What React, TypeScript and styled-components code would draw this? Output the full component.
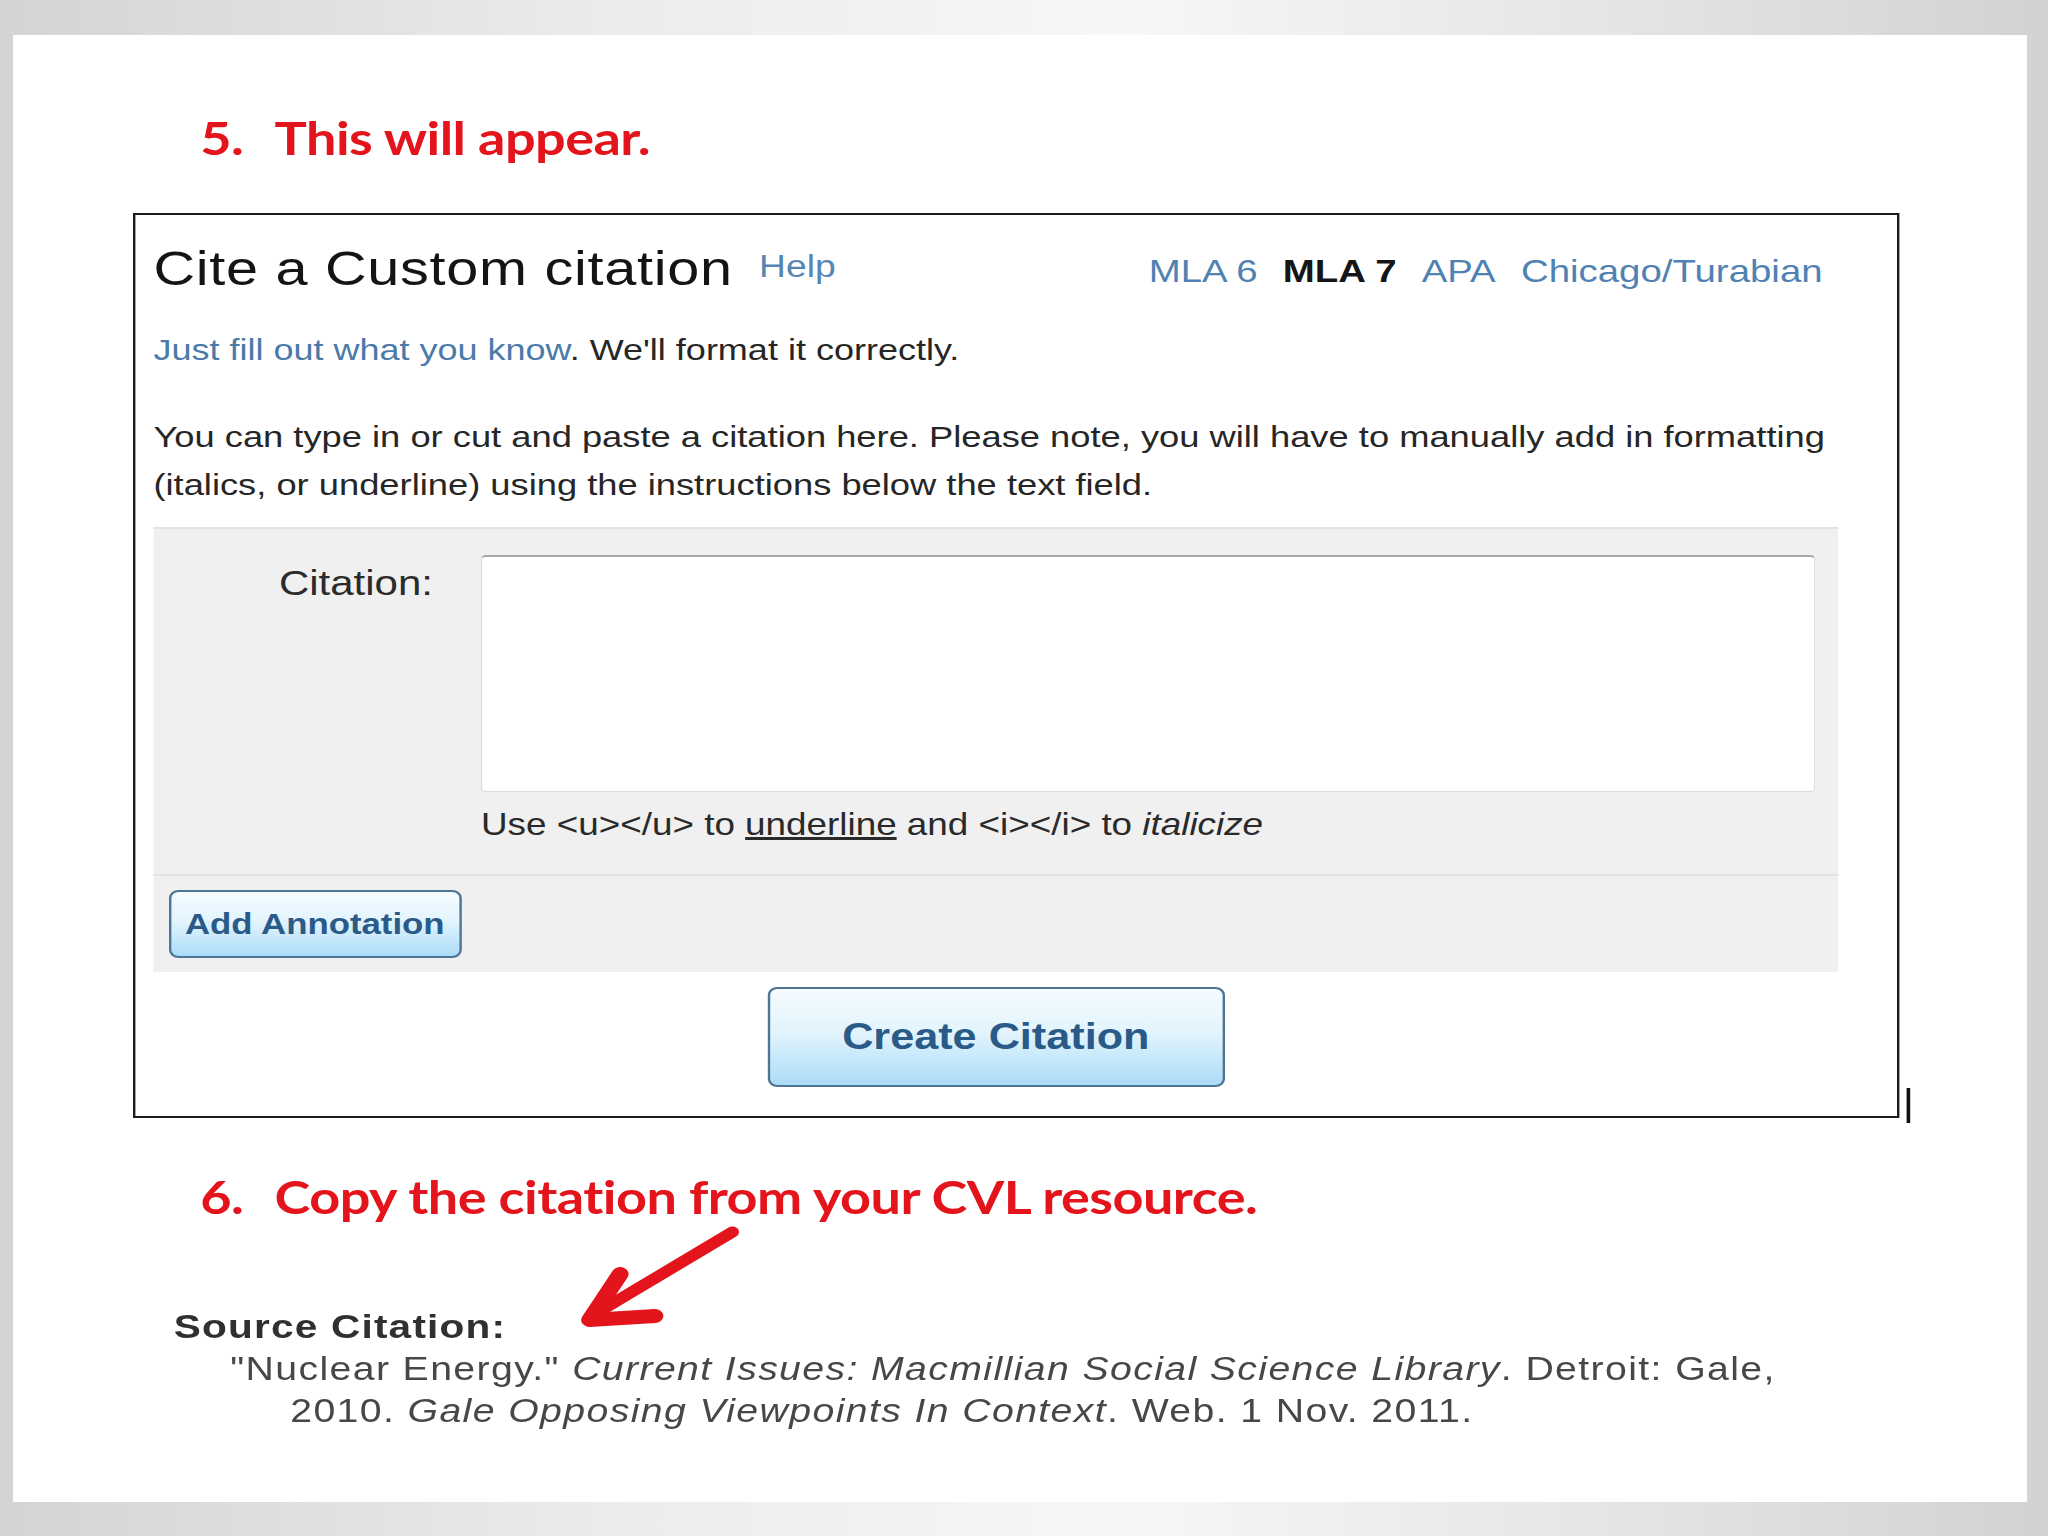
import React from 'react';
import styled, { createGlobalStyle } from 'styled-components';

const GlobalStyle = createGlobalStyle`
  html, body {
    margin: 0;
    padding: 0;
  }
  body {
    width: 2048px;
    height: 1536px;
    overflow: hidden;
    background: linear-gradient(90deg, #d4d4d4 0%, #ececec 30%, #f7f7f7 55%, #e4e4e4 80%, #d2d2d2 100%);
    font-family: "Liberation Sans", Arial, sans-serif;
  }
`;

const Slide = styled.div`
  margin: 35px 0 0 13px;
  width: 2014px;
  height: 1467px;
  background: #fff;
  overflow: hidden;
`;

// the pasted screenshot is stretched sideways, so the content is laid out narrow and widened
const Stretch = styled.div`
  width: 1678px;
  padding-top: 76px;
  transform: scaleX(1.2);
  transform-origin: 0 0;
`;

const StepHeading = styled.h2<{ $top: number }>`
  display: flex;
  margin: ${p => p.$top}px 0 0;
  padding-left: 156px;
  font-family: Lato, "Open Sans", sans-serif;
  font-weight: 700;
  font-size: 45px;
  line-height: 54px;
  letter-spacing: -0.45px;
  color: #e4141c;
`;

const StepNum = styled.span`
  flex-shrink: 0;
  width: 62px;
`;

const CiteBox = styled.section`
  position: relative;
  box-sizing: border-box;
  width: 1472px;
  margin: 48px 0 0 100px;
  padding: 26px 49px 29px 15px;
  border: 2px solid #1b1b1b;
  background: #fff;
`;

const Caret = styled.span`
  position: absolute;
  right: -10.5px;
  bottom: -7px;
  width: 3px;
  height: 35px;
  background: #111;
`;

const HeaderRow = styled.div`
  display: flex;
  align-items: baseline;
  height: 56px;
`;

const Title = styled.h1`
  margin: 0;
  font-weight: 400;
  font-size: 48px;
  line-height: 56px;
  letter-spacing: 0.6px;
  color: #141414;
`;

const HelpLink = styled.a`
  align-self: flex-start;
  margin: 8px 0 0 22px;
  font-size: 31px;
  line-height: 36px;
  color: #5886b4;
  text-decoration: none;
`;

const StyleLinks = styled.nav`
  align-self: flex-start;
  display: flex;
  gap: 21px;
  margin: 12px 0 0 auto;
  padding-right: 13px;
  font-size: 32px;
  line-height: 36px;
`;

const StyleLink = styled.a<{ $active?: boolean }>`
  color: ${p => (p.$active ? '#151515' : '#4f82b3')};
  font-weight: ${p => (p.$active ? 700 : 400)};
  text-decoration: none;
`;

const Intro = styled.p`
  margin: 35px 0 0;
  font-size: 30px;
  line-height: 36px;
  color: #262626;
  white-space: nowrap;
`;

const Accent = styled.span`
  color: #4a7aa8;
`;

const Instructions = styled.p`
  margin: 45px 0 0;
  font-size: 30.25px;
  line-height: 48px;
  color: #262626;
  white-space: nowrap;
`;

const FormPanel = styled.div`
  margin-top: 18px;
  border-top: 2px solid #e2e2e3;
  background: #f0f0f1;
`;

const FieldRow = styled.div`
  display: grid;
  grid-template-columns: 233px 1fr;
  column-gap: 40px;
  padding: 26px 19px 31px 0;
  border-bottom: 2px solid #e3e3e4;
`;

const FieldLabel = styled.label`
  margin-top: 8px;
  font-size: 35px;
  line-height: 40px;
  text-align: right;
  color: #2b2b2b;
`;

const CitationInput = styled.textarea`
  display: block;
  box-sizing: border-box;
  width: 100%;
  height: 237px;
  margin: 0;
  border: 1px solid #dadada;
  border-top: 2px solid #a8a8a8;
  border-radius: 4px;
  background: #fff;
  resize: none;
  outline: none;
`;

const Hint = styled.div`
  grid-column: 2;
  margin-top: 15px;
  font-size: 30.7px;
  line-height: 36px;
  color: #2a2a2a;
  white-space: nowrap;
`;

const ButtonBar = styled.div`
  padding: 14px 0 14px 12.5px;
`;

const BlueButton = styled.button<{ $large?: boolean }>`
  display: block;
  box-sizing: border-box;
  width: ${p => (p.$large ? 381 : 244)}px;
  height: ${p => (p.$large ? 100 : 68)}px;
  padding: 0;
  border: 2px solid #4d7594;
  border-radius: 8px;
  background: linear-gradient(180deg, #f5fcff 0%, #e3f4fd 45%, #abdcf8 100%);
  font-family: "Liberation Sans", Arial, sans-serif;
  font-weight: 700;
  font-size: ${p => (p.$large ? 36 : 29)}px;
  color: #2a5b88;
`;

const CreateRow = styled.div`
  display: flex;
  justify-content: center;
  margin-top: 15px;
`;

const SourceRow = styled.div`
  display: flex;
  align-items: flex-end;
  margin-top: -4px;
  padding-left: 134px;
`;

const SourceLabel = styled.div`
  font-weight: 700;
  font-size: 33.8px;
  line-height: 36px;
  letter-spacing: 1px;
  color: #303030;
`;

const ArrowSvg = styled.svg`
  flex-shrink: 0;
  margin: 0 0 12px 50px;
`;

const SourceText = styled.p`
  margin: 4px 0 0;
  padding-left: 231px;
  text-indent: -50px;
  font-size: 32.7px;
  line-height: 42px;
  letter-spacing: 1.15px;
  color: #474747;
  white-space: nowrap;
`;

const Arrow: React.FC = () => (
  <ArrowSvg width="153" height="112" viewBox="0 0 153 112">
    <line x1="138.5" y1="12" x2="24" y2="94" stroke="#e3141c" strokeWidth="11" strokeLinecap="round" />
    <polyline
      points="45,54 19.5,100 74,96"
      fill="none"
      stroke="#e3141c"
      strokeWidth="14"
      strokeLinejoin="round"
      strokeLinecap="round"
    />
  </ArrowSvg>
);

const citationStyles = [
  { label: 'MLA 6' },
  { label: 'MLA 7', active: true },
  { label: 'APA' },
  { label: 'Chicago/Turabian' },
];

const App: React.FC = () => {
  return (
    <>
      <GlobalStyle />
      <Slide>
        <Stretch>
          <StepHeading $top={0}>
            <StepNum>5.</StepNum>
            This will appear.
          </StepHeading>

          <CiteBox>
            <HeaderRow>
              <Title>Cite a Custom citation</Title>
              <HelpLink>Help</HelpLink>
              <StyleLinks>
                {citationStyles.map(s => (
                  <StyleLink key={s.label} $active={s.active}>
                    {s.label}
                  </StyleLink>
                ))}
              </StyleLinks>
            </HeaderRow>

            <Intro>
              <Accent>Just fill out what you know</Accent>. We'll format it correctly.
            </Intro>

            <Instructions>
              You can type in or cut and paste a citation here. Please note, you will have to manually add in formatting
              <br />
              (italics, or underline) using the instructions below the text field.
            </Instructions>

            <FormPanel>
              <FieldRow>
                <FieldLabel>Citation:</FieldLabel>
                <CitationInput />
                <Hint>
                  Use &lt;u&gt;&lt;/u&gt; to <u>underline</u> and &lt;i&gt;&lt;/i&gt; to <i>italicize</i>
                </Hint>
              </FieldRow>
              <ButtonBar>
                <BlueButton>Add Annotation</BlueButton>
              </ButtonBar>
            </FormPanel>

            <CreateRow>
              <BlueButton $large>Create Citation</BlueButton>
            </CreateRow>
            <Caret />
          </CiteBox>

          <StepHeading $top={52}>
            <StepNum>6.</StepNum>
            Copy the citation from your CVL resource.
          </StepHeading>

          <SourceRow>
            <SourceLabel>Source Citation:</SourceLabel>
            <Arrow />
          </SourceRow>
          <SourceText>
            "Nuclear Energy." <i>Current Issues: Macmillian Social Science Library</i>. Detroit: Gale,
            <br />
            2010. <i>Gale Opposing Viewpoints In Context</i>. Web. 1 Nov. 2011.
          </SourceText>
        </Stretch>
      </Slide>
    </>
  );
};

export default App;
